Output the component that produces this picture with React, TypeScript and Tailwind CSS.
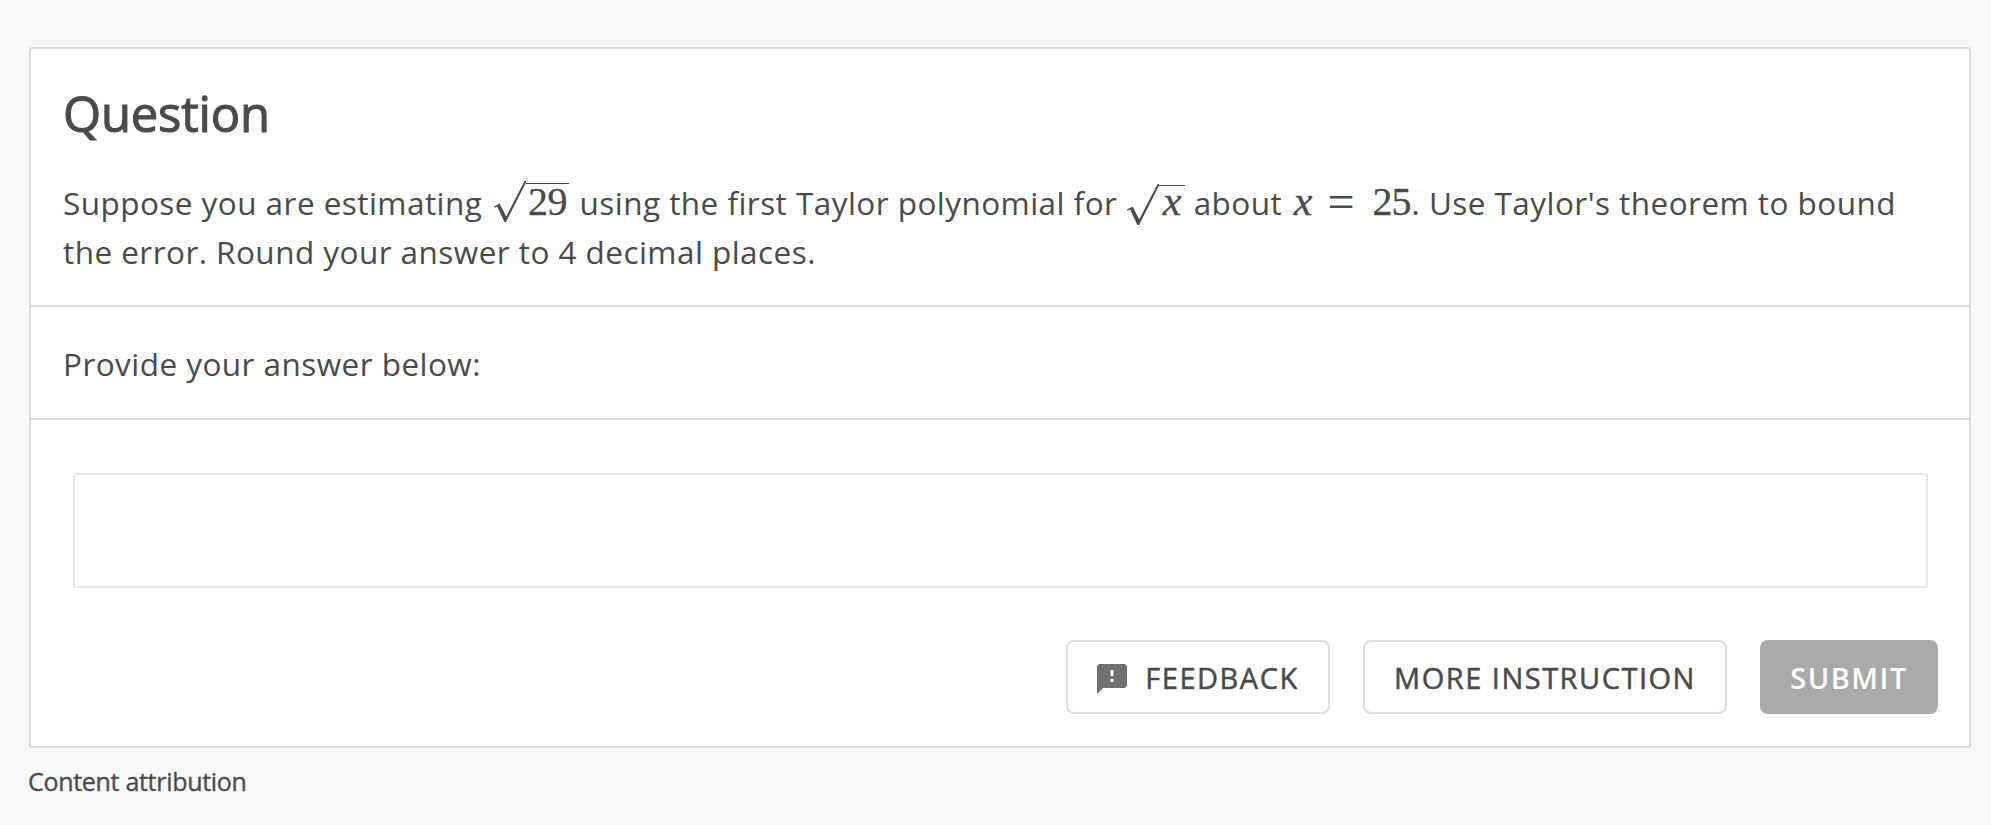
function Radical({ drop }: { drop: number }) {
  return (
    <svg
      width="33"
      height="41"
      viewBox="0 0 33 41"
      className="inline -my-[12px]"
      style={{ verticalAlign: `${12 - drop}px` }}
    >
      <path d="M1 25.5 L6.6 22.4 L13.2 35.6 L31.6 0 L33 0 L33 1.4 L13 41 L11.4 41 L4.2 25.4 L1.5 26.8 Z" fill="#4a4a4a" />
    </svg>
  );
}

function Sqrt({ w, drop, line, outer, children }: { w: number; drop: number; line: string; outer: string; children: React.ReactNode }) {
  return (
    <span className={`whitespace-nowrap ${outer}`}>
      <Radical drop={drop} />
      <span
        className={`inline-block -my-[10px] border-t-[1.5px] border-[#4a4a4a] text-center font-['Liberation_Serif',serif] tracking-normal ${line}`}
        style={{ width: w }}
      >
        {children}
      </span>
    </span>
  );
}

export default function App() {
  return (
    <div className="min-h-[825px] bg-[#f8f8f8] pt-[47px] pl-[29px] font-['Open_Sans',sans-serif] text-[#4a4a4a]">
      <div className="w-[1942px] h-[701px] bg-white border-2 border-[#dddddd] rounded-[3px] flex flex-col">
        <div className="h-[258px] shrink-0 border-b-2 border-[#dddddd] px-[32px] pt-[33px]">
          <h1 className="text-[49px] leading-[62px] font-normal tracking-[-0.2px] [-webkit-text-stroke:1.1px_#4a4a4a]">Question</h1>
          <p className="mt-[34px] text-[31.5px] leading-[48.5px] tracking-[0.45px] w-[1880px]">
            Suppose you are estimating{" "}
            <Sqrt w={43} drop={7} line="leading-[36px]" outer="ml-[2px] mr-[2px]"><span className="text-[40px] tracking-[-0.5px] [-webkit-text-stroke:0.3px_#4a4a4a]">29</span></Sqrt>{" "}
            using the first Taylor polynomial for{" "}
            <Sqrt w={26} drop={10} line="leading-[31px]" outer=""><i className="text-[42px] [-webkit-text-stroke:0.3px_#4a4a4a]">x</i></Sqrt>{" "}
            about <i className="ml-[3px] font-['Liberation_Serif',serif] text-[42px] leading-none tracking-normal [-webkit-text-stroke:0.3px_#4a4a4a]">x</i>
            <span className="font-['Liberation_Serif',serif] text-[48px] ml-[15px] mr-[18px] leading-none tracking-normal align-[-3px]">=</span>
            <span className="font-['Liberation_Serif',serif] text-[40px] leading-none tracking-[-1px] [-webkit-text-stroke:0.3px_#4a4a4a]">25</span><span className="ml-[1px]">.</span> Use Taylor's theorem to bound the error. Round your answer to 4 decimal places.
          </p>
        </div>
        <div className="h-[113px] shrink-0 border-b-2 border-[#dddddd] px-[32px] pt-[2px] flex items-center text-[31.5px] tracking-[0.45px]">
          Provide your answer below:
        </div>
        <div className="flex-1 flex flex-col pt-[53px] pl-[42px] pr-[31px]">
          <div className="h-[115px] w-[1855px] bg-white border-2 border-[#e8e8e8] rounded-[3px]" />
          <div className="mt-[52px] flex justify-end gap-[33px] tracking-[1.5px]">
            <button className="h-[74px] w-[264px] pt-[2px] flex items-center justify-center gap-[15px] bg-white border-2 border-[#dddddd] rounded-[8px] text-[29px] [-webkit-text-stroke:0.5px_#4a4a4a]">
              <svg width="36" height="36" viewBox="0 0 24 24" fill="#707070" className="shrink-0 -ml-[3px] mt-[2px]">
                <path d="M20 2H4c-1.1 0-1.99.9-1.99 2L2 22l4-4h14c1.1 0 2-.9 2-2V4c0-1.1-.9-2-2-2zm-7 12h-2v-2h2v2zm0-4h-2V6h2v4z" />
              </svg>
              <span>FEEDBACK</span>
            </button>
            <button className="h-[74px] w-[364px] pt-[2px] flex items-center justify-center bg-white border-2 border-[#dddddd] rounded-[8px] text-[29px] [-webkit-text-stroke:0.5px_#4a4a4a]">
              MORE INSTRUCTION
            </button>
            <button className="h-[74px] w-[178px] pt-[2px] flex items-center justify-center bg-[#a9a9a9] rounded-[8px] text-[29px] font-semibold text-white">
              SUBMIT
            </button>
          </div>
        </div>
      </div>
      <div className="-ml-px mt-[18px] text-[25px] leading-[30px] tracking-[-0.3px] [-webkit-text-stroke:0.35px_#4a4a4a]">Content attribution</div>
    </div>
  );
}
